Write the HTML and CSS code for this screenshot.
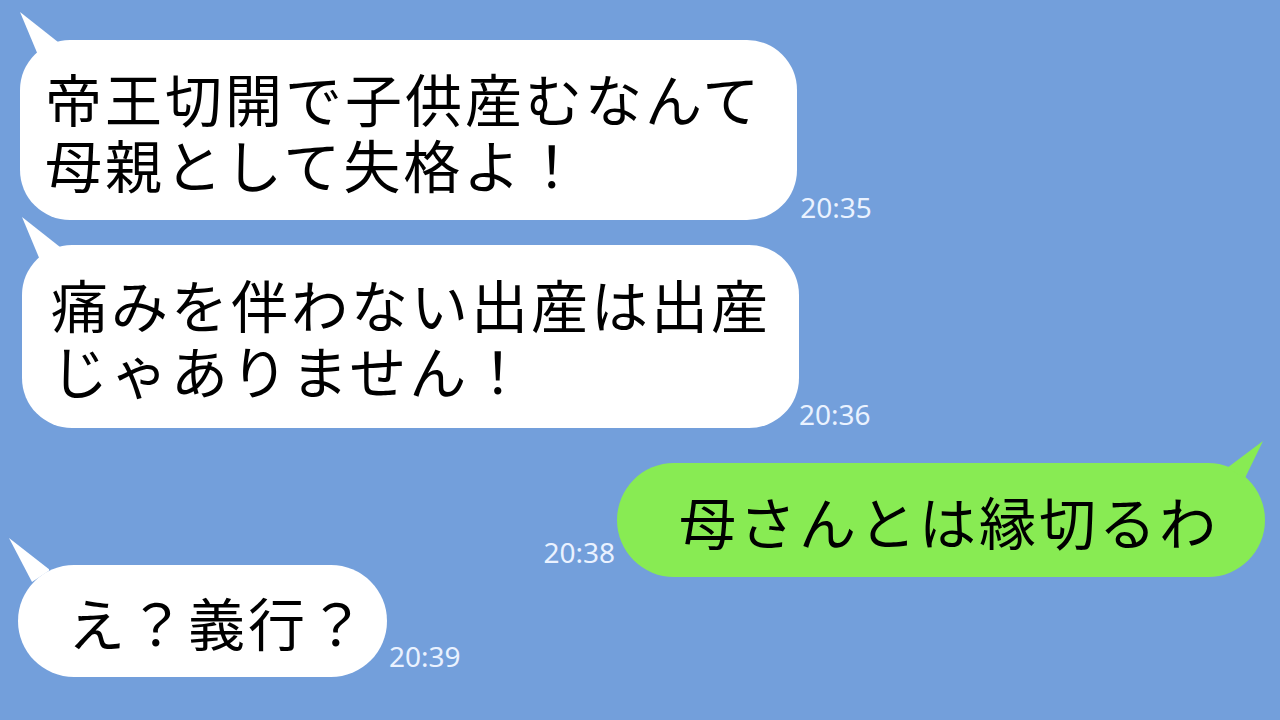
FILE: index.html
```html
<!DOCTYPE html>
<html lang="ja">
<head>
<meta charset="utf-8">
<link rel="stylesheet" href="styles.css">
</head>
<body>
<main class="chat">
  <div class="row row-1">
    <div class="bubble in b1">帝王切開で子供産むなんて<br>母親として失格よ！</div>
    <span class="time t1">20:35</span>
  </div>
  <div class="row row-2">
    <div class="bubble in b2">痛みを伴わない出産は出産<br>じゃありません！</div>
    <span class="time t2">20:36</span>
  </div>
  <div class="row row-3 out-row">
    <span class="time t3">20:38</span>
    <div class="bubble out b3">母さんとは縁切るわ</div>
  </div>
  <div class="row row-4">
    <div class="bubble in b4">え？義行？</div>
    <span class="time t4">20:39</span>
  </div>
</main>
</body>
</html>
```
FILE: styles.css
```css
html, body {
  margin: 0;
  padding: 0;
}
body {
  width: 1280px;
  height: 720px;
  overflow: hidden;
  background: #739fdb;
  font-family: "Noto Sans CJK JP", "Noto Sans", sans-serif;
}
.chat {
  display: flex;
  flex-direction: column;
}
.row {
  display: flex;
  align-items: flex-end;
}
.out-row {
  justify-content: flex-end;
}
.row-1 { margin-top: 40px; }
.row-2 { margin-top: 25px; }
.row-3 { margin-top: 35px; }
.row-4 { margin-top: -12px; }

.bubble {
  position: relative;
  font-size: 57px;
  letter-spacing: 3px;
  line-height: 66px;
  color: #000;
  white-space: nowrap;
}
.bubble.in { background: #fff; }
.bubble.out { background: #88eb53; }

.bubble::before {
  content: "";
  position: absolute;
  background: inherit;
}
.bubble.in::before {
  left: 0;
  top: -28px;
  width: 40px;
  height: 45px;
  clip-path: polygon(0 0, 18px 43px, 38px 30px);
}
.bubble.out::before {
  right: 0;
  top: -22px;
  width: 40px;
  height: 40px;
  clip-path: polygon(38px 0, 2px 27px, 20px 37px);
}

.b1 {
  margin-left: 20px;
  padding: 24px 35px 24px 25px;
  border-radius: 50px;
}
.b2 {
  margin-left: 22px;
  padding: 25px 28px 26px 29px;
  border-radius: 50px;
}
.b2::before { left: 3px; top: -27px; }
.b3 {
  margin-right: 15px;
  padding: 24px 46px 24px 62px;
  border-radius: 57px;
}
.b4 {
  margin-left: 18px;
  padding: 23px 19px 23px 50px;
  border-radius: 56px;
}
.b4.in::before {
  left: -9px;
  top: -27px;
  clip-path: polygon(0 0, 23px 44px, 41px 32px);
}

.time {
  font-family: "Noto Sans", "DejaVu Sans", sans-serif;
  font-size: 28px;
  line-height: 28px;
  color: #eaf2ff;
  white-space: nowrap;
}
.t1 { margin-left: 3px; margin-bottom: -1px; }
.t2 { margin-left: 0; margin-bottom: 0; }
.t3 { margin-right: 2px; margin-bottom: 11px; }
.t4 { margin-left: 2px; margin-bottom: 7px; }
```
